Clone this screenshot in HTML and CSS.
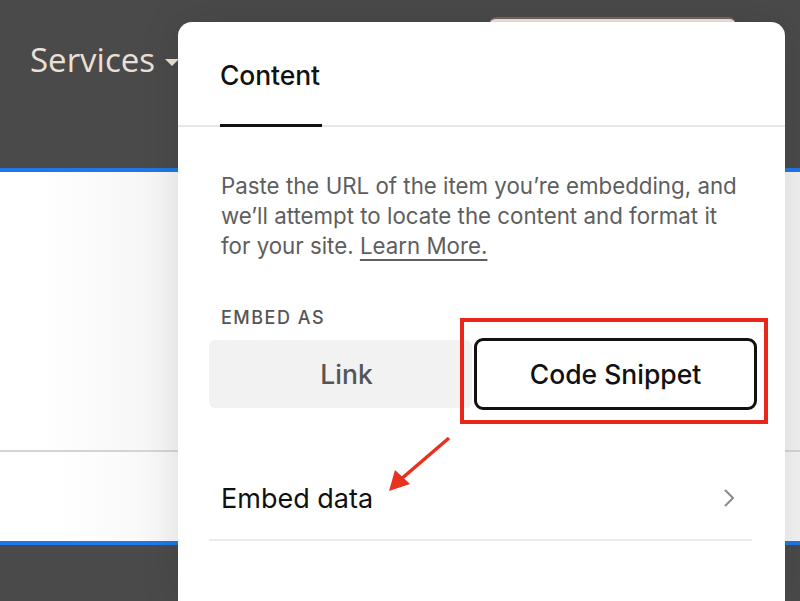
FILE: index.html
```html
<!DOCTYPE html>
<html>
<head>
<meta charset="utf-8">
<link rel="stylesheet" href="styles.css">
</head>
<body>
<div class="page">
  <header class="topbar">
    <nav class="nav">
      <span class="nav-item">Services</span>
      <span class="caret"></span>
    </nav>
    <div class="cta"></div>
  </header>
  <div class="blue-line"></div>
  <section class="band-light"></section>
  <div class="gray-line"></div>
  <section class="band-white"></section>
  <div class="blue-line"></div>
  <footer class="bottombar"></footer>
</div>

<div class="panel">
  <div class="tabs">
    <div class="tab active">Content</div>
  </div>
  <div class="body">
    <p class="desc">Paste the URL of the item you’re embedding, and we’ll attempt to locate the content and format it for your site. <a class="learn">Learn More.</a></p>
    <div class="label">EMBED AS</div>
    <div class="toggle">
      <div class="opt opt-link">Link</div>
      <div class="opt opt-code">Code Snippet</div>
    </div>
    <div class="row">
      <span>Embed data</span>
      <svg class="chev" width="14" height="22" viewBox="0 0 14 22"><path d="M3 3 L11 11 L3 19" fill="none" stroke="#8a8a8a" stroke-width="2"/></svg>
    </div>
  </div>
</div>

<div class="highlight"></div>
<svg class="arrow" width="70" height="62" viewBox="0 0 70 62">
  <line x1="63" y1="4" x2="14" y2="46" stroke="#e8311f" stroke-width="3.5"/>
  <polygon points="3,57 9,36 24,50" fill="#e8311f"/>
</svg>
</body>
</html>
```
FILE: styles.css
```css
html, body {
  margin: 0;
  padding: 0;
}
body {
  width: 800px;
  height: 601px;
  overflow: hidden;
  position: relative;
  font-family: "Inter", "Liberation Sans", sans-serif;
}
.page {
  display: flex;
  flex-direction: column;
  height: 601px;
}
.topbar {
  height: 168px;
  background: #4a4a4a;
  display: flex;
  align-items: flex-start;
}
.nav {
  display: flex;
  align-items: center;
  padding: 38px 0 0 30px;
  gap: 10px;
}
.nav-item {
  font-family: "Open Sans", sans-serif;
  font-size: 33px;
  color: #eae0d6;
  line-height: 44px;
}
.caret {
  width: 0;
  height: 0;
  border-left: 7px solid transparent;
  border-right: 7px solid transparent;
  border-top: 7px solid #eae0d6;
  margin-top: 4px;
}
.cta {
  margin: 17px 0 0 311px;
  width: 245px;
  height: 40px;
  background: #ece3dc;
  border-radius: 6px;
  border-top: 2px solid #7a655c;
}
.blue-line {
  height: 4px;
  background: #1f78e6;
}
.band-light {
  height: 278px;
  background: linear-gradient(to right, #ffffff 0px, #ffffff 40px, #f4f4f4 178px, #f1f1f1 100%);
}
.gray-line {
  height: 2px;
  background: #d4d4d4;
}
.band-white {
  height: 89px;
  background: linear-gradient(to right, #ffffff 0px, #ffffff 60px, #f6f6f6 178px, #f3f3f3 100%);
}
.bottombar {
  flex: 1;
  background: #4a4a4a;
}

.panel {
  position: absolute;
  left: 178px;
  top: 22px;
  width: 607px;
  height: 579px;
  background: #fff;
  border-radius: 14px 14px 0 0;
  box-shadow: 0 0 40px rgba(0,0,0,0.10);
}
.tabs {
  height: 103px;
  border-bottom: 2px solid #e6e6e6;
  padding-left: 42px;
  display: flex;
}
.tab {
  font-size: 26.5px;
  font-weight: 500;
  color: #111;
  width: 102px;
  padding-top: 38px;
  line-height: 30px;
  border-bottom: 3px solid #111;
  margin-bottom: -2px;
  box-sizing: border-box;
  height: 105px;
  letter-spacing: -0.1px;
}
.body {
  padding: 0 26px 0 31px;
}
.desc {
  margin: 44px 0 0 12px;
  font-size: 22.3px;
  line-height: 30px;
  color: #5e5e5e;
  width: 525px;
}
.learn {
  color: #5e5e5e;
  text-decoration: underline;
  text-decoration-thickness: 2px;
  text-underline-offset: 5px;
}
.label {
  margin: 46px 0 0 12px;
  font-size: 18px;
  font-weight: 500;
  letter-spacing: 1.5px;
  color: #555;
  line-height: 22px;
}
.toggle {
  display: flex;
  align-items: center;
  margin-top: 9px;
  gap: 2px;
}
.opt {
  display: flex;
  align-items: center;
  justify-content: center;
  box-sizing: border-box;
}
.opt-link {
  width: 263px;
  height: 68px;
  padding-left: 12px;
  background: #f2f2f2;
  border-radius: 6px;
  font-size: 26.5px;
  font-weight: 500;
  color: #555;
}
.opt-code {
  width: 283px;
  height: 72px;
  background: #fff;
  border: 3px solid #111;
  border-radius: 9px;
  font-size: 26.5px;
  font-weight: 500;
  color: #111;
}
.row {
  margin-top: 47px;
  margin-right: 7px;
  height: 84px;
  border-bottom: 2px solid #ebebeb;
  display: flex;
  align-items: center;
  justify-content: space-between;
  padding: 0 16px 0 12px;
  font-size: 27px;
  color: #111;
  box-sizing: border-box;
}
.chev {
  display: block;
}
.highlight {
  position: absolute;
  left: 460px;
  top: 318px;
  width: 308px;
  height: 106px;
  box-sizing: border-box;
  border: 4px solid #e8261a;
}
.arrow {
  position: absolute;
  left: 386px;
  top: 434px;
}
```
